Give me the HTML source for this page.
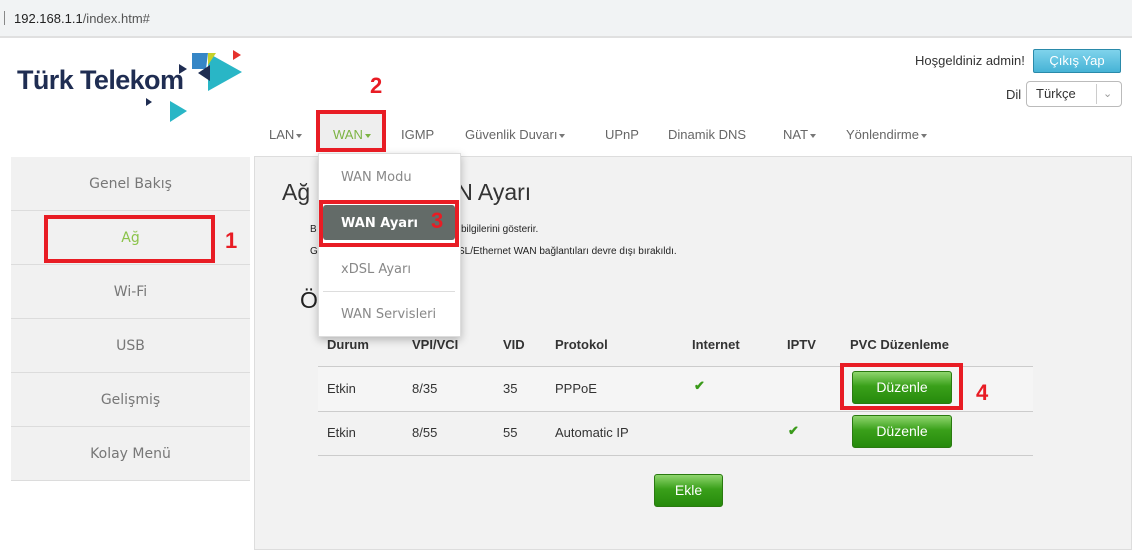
<!DOCTYPE html><html><head><meta charset="utf-8"><style>
*{margin:0;padding:0;box-sizing:border-box}
body{width:1132px;height:553px;overflow:hidden;background:#fff;font-family:"Liberation Sans",sans-serif;position:relative}
.a{position:absolute;white-space:nowrap}
.nav{font-size:13px;color:#666;top:127px}
.car{display:inline-block;border-top:4px solid #777;border-left:3px solid transparent;border-right:3px solid transparent;vertical-align:middle;margin-left:2px}
.side{position:absolute;left:11px;width:239px;height:54px;background:#f1f1f1;border-bottom:1px solid #dcdcdc;text-align:center;line-height:54px;font-family:"DejaVu Sans",sans-serif;font-size:14px;color:#777}
.rb{position:absolute;border:4px solid #e81c24}
.num{position:absolute;color:#e81c24;font-weight:bold;font-size:22px}
.dd{font-family:"DejaVu Sans",sans-serif;font-size:13px;color:#888;position:absolute;left:341px}
.th{font-size:13px;font-weight:bold;color:#333;top:337px}
.td{font-size:13px;color:#333}
.btn{position:absolute;width:100px;height:33px;border:1px solid #2a7a10;border-radius:3px;background:linear-gradient(#8fd66e,#3aa01a 45%,#268a0c);color:#fff;font-size:14px;text-align:center;line-height:31px}
.chk{color:#3a9a1a;font-size:13px;font-weight:bold}
</style></head><body>
<div class="a" style="left:0;top:0;width:1132px;height:38px;background:#f1f3f4;border-bottom:2px solid #e0e0e0"></div>
<div class="a" style="left:4px;top:11px;width:1px;height:14px;background:#888"></div>
<div class="a" style="left:14px;top:11px;font-size:13px;color:#222">192.168.1.1<span style="color:#555">/index.htm#</span></div>

<div class="a" style="left:17px;top:65px;font-size:27px;font-weight:bold;color:#1f2d52;letter-spacing:-0.6px">Türk Telekom</div>
<svg class="a" style="left:140px;top:45px" width="105" height="80">
<polygon points="68,8 102,27 68,46" fill="#29b6c6"/>
<polygon points="52,8 68,8 66,24 52,24" fill="#1f79c0" opacity=".9"/>
<polygon points="68,8 76,8 68,20" fill="#c6d12a"/>
<polygon points="58,28 70,20 70,36" fill="#1f2d52"/>
<polygon points="39,19 47,24 39,29" fill="#1f2d52"/>
<polygon points="93,5 101,10 93,15" fill="#e5322d"/>
<polygon points="6,53 12,57 6,61" fill="#1f2d52"/>
<polygon points="30,56 47,66 30,77" fill="#29b6c6"/>
</svg>

<div class="a" style="left:915px;top:53px;font-size:13px;color:#333">Hoşgeldiniz admin!</div>
<div class="a" style="left:1033px;top:49px;width:88px;height:24px;border:1px solid #2a8aaa;border-radius:2px;background:linear-gradient(#7fd3ec,#46b3d6);color:#fff;font-size:13px;text-align:center;line-height:22px">Çıkış Yap</div>
<div class="a" style="left:1006px;top:87px;font-size:13px;color:#333">Dil</div>
<div class="a" style="left:1026px;top:81px;width:96px;height:26px;border:1px solid #bbb;border-radius:4px;background:#fff;font-size:13px;color:#333;line-height:24px;padding-left:9px">Türkçe<span style="position:absolute;left:69px;top:2px;width:1px;height:20px;background:#ccc"></span><span style="position:absolute;left:76px;top:0;color:#999;font-size:11px">&#8964;</span></div>

<div class="a nav" style="left:269px">LAN<span class="car"></span></div>
<div class="a" style="left:319px;top:113px;width:64px;height:38px;background:#eee"></div>
<div class="a nav" style="left:333px;color:#7cb342">WAN<span class="car" style="border-top-color:#7cb342"></span></div>
<div class="a nav" style="left:401px">IGMP</div>
<div class="a nav" style="left:465px">Güvenlik Duvarı<span class="car"></span></div>
<div class="a nav" style="left:605px">UPnP</div>
<div class="a nav" style="left:668px">Dinamik DNS</div>
<div class="a nav" style="left:783px">NAT<span class="car"></span></div>
<div class="a nav" style="left:846px">Yönlendirme<span class="car"></span></div>

<div class="side" style="top:157px;border-top:0">Genel Bakış</div>
<div class="side" style="top:211px;color:#8bc34a">Ağ</div>
<div class="side" style="top:265px">Wi-Fi</div>
<div class="side" style="top:319px">USB</div>
<div class="side" style="top:373px">Gelişmiş</div>
<div class="side" style="top:427px">Kolay Menü</div>

<div class="a" style="left:254px;top:156px;width:878px;height:394px;background:#f2f2f2;border:1px solid #ddd"></div>
<div class="a" style="left:282px;top:179px;font-size:23px;color:#333">Ağ</div>
<div class="a" style="left:420px;top:179px;font-size:23px;color:#333">WAN Ayarı</div>
<div class="a" style="left:310px;top:224px;font-size:10px;color:#222">B</div>
<div class="a" style="left:461px;top:224px;font-size:10px;color:#222">bilgilerini gösterir.</div>
<div class="a" style="left:310px;top:246px;font-size:10px;color:#222">G</div>
<div class="a" style="left:458px;top:246px;font-size:10px;color:#222">SL/Ethernet WAN bağlantıları devre dışı bırakıldı.</div>
<div class="a" style="left:300px;top:287px;font-size:23px;color:#222">Ö</div>

<div class="a th" style="left:327px">Durum</div>
<div class="a th" style="left:412px">VPI/VCI</div>
<div class="a th" style="left:503px">VID</div>
<div class="a th" style="left:555px">Protokol</div>
<div class="a th" style="left:692px">Internet</div>
<div class="a th" style="left:787px">IPTV</div>
<div class="a th" style="left:850px">PVC Düzenleme</div>
<div class="a" style="left:318px;top:366px;width:715px;height:1px;background:#ccc"></div>
<div class="a" style="left:318px;top:367px;width:715px;height:44px;background:#f5f5f5"></div>
<div class="a" style="left:318px;top:411px;width:715px;height:1px;background:#ccc"></div>
<div class="a" style="left:318px;top:455px;width:715px;height:1px;background:#ccc"></div>
<div class="a td" style="left:327px;top:381px">Etkin</div>
<div class="a td" style="left:412px;top:381px">8/35</div>
<div class="a td" style="left:503px;top:381px">35</div>
<div class="a td" style="left:555px;top:381px">PPPoE</div>
<div class="a chk" style="left:694px;top:378px">✔</div>
<div class="btn" style="left:852px;top:371px">Düzenle</div>
<div class="a td" style="left:327px;top:425px">Etkin</div>
<div class="a td" style="left:412px;top:425px">8/55</div>
<div class="a td" style="left:503px;top:425px">55</div>
<div class="a td" style="left:555px;top:425px">Automatic IP</div>
<div class="a chk" style="left:788px;top:423px">✔</div>
<div class="btn" style="left:852px;top:415px">Düzenle</div>
<div class="btn" style="left:654px;top:474px;width:69px">Ekle</div>

<div class="a" style="left:318px;top:153px;width:143px;height:184px;background:#fff;border:1px solid #ddd;box-shadow:0 3px 8px rgba(0,0,0,.25)"></div>
<div class="dd" style="top:170px">WAN Modu</div>
<div class="a" style="left:323px;top:205px;width:132px;height:35px;background:#636b68;border-radius:3px"></div>
<div class="dd" style="top:216px;color:#fff;font-weight:bold">WAN Ayarı</div>
<div class="dd" style="top:262px">xDSL Ayarı</div>
<div class="a" style="left:323px;top:291px;width:132px;height:1px;background:#ddd"></div>
<div class="dd" style="top:307px">WAN Servisleri</div>

<div class="rb" style="left:316px;top:110px;width:70px;height:42px"></div>
<div class="rb" style="left:44px;top:215px;width:171px;height:48px"></div>
<div class="rb" style="left:319px;top:200px;width:140px;height:47px"></div>
<div class="rb" style="left:840px;top:363px;width:123px;height:47px"></div>
<div class="num" style="left:370px;top:73px">2</div>
<div class="num" style="left:225px;top:228px">1</div>
<div class="num" style="left:431px;top:208px">3</div>
<div class="num" style="left:976px;top:380px">4</div>
</body></html>
